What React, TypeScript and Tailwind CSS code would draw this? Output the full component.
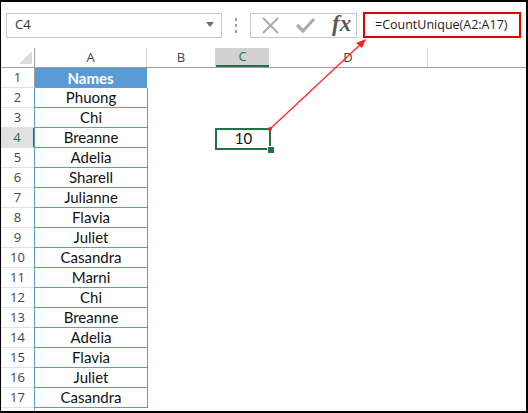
import React from "react";

const names = [
  "Phuong","Chi","Breanne","Adelia","Sharell","Julianne","Flavia","Juliet",
  "Casandra","Marni","Chi","Breanne","Adelia","Flavia","Juliet","Casandra",
];

const cellFont = { fontFamily: "Lato, 'Open Sans', sans-serif" };

export default function App() {
  return (
    <div className="relative w-[528px] h-[413px] overflow-hidden bg-white border-t-2 border-r-2 border-b-2 border-l border-black box-border">
      {/* Formula bar */}
      <div className="flex items-center h-[46px] pl-[5px]" style={{ fontFamily: "'Open Sans', 'Noto Sans', sans-serif" }}>
        <div className="flex items-center justify-between w-[216px] h-[25px] border border-[#c6c6c6] pl-[8px] pr-[6px] text-[13px] text-[#333]">
          <span>C4</span>
          <svg width="10" height="6" viewBox="0 0 10 6"><path d="M1 0 L9 0 L5 5 Z" fill="#6d6d6d" /></svg>
        </div>
        <div className="flex flex-col gap-[3px] ml-[13px] mr-[13px]">
          <div className="w-[2px] h-[3px] bg-[#a0a0a0]" />
          <div className="w-[2px] h-[3px] bg-[#a0a0a0]" />
          <div className="w-[2px] h-[3px] bg-[#a0a0a0]" />
        </div>
        <div className="flex items-center w-[107px] h-[25px] border border-[#c6c6c6]">
          <svg className="ml-[10px]" width="19" height="19" viewBox="0 0 19 19">
            <path d="M2 2 L17 17 M17 2 L2 17" stroke="#ababab" strokeWidth="2" />
          </svg>
          <svg className="ml-[15px]" width="21" height="18" viewBox="0 0 21 18">
            <path d="M2 9 L8 15 L19 3" stroke="#ababab" strokeWidth="3.2" fill="none" />
          </svg>
          <span className="ml-[16px] text-[23px] italic font-bold text-[#5a5a5a] leading-none -mt-[3px]" style={{ fontFamily: "'Liberation Serif', serif" }}>
            fx
          </span>
        </div>
        <div className="flex items-center w-[158px] h-[26px] ml-[6px] border-2 border-[#e00000] pl-[10px] text-[12.5px] text-[#222] whitespace-nowrap">
          =CountUnique(A2:A17)
        </div>
      </div>

      {/* Column headers */}
      <div className="flex h-[20px] border-b border-[#9e9e9e] text-[13px] text-[#444]" style={{ fontFamily: "'Open Sans', 'Noto Sans', sans-serif" }}>
        <div className="relative w-[34px] border-r border-[#9e9e9e]">
          <svg className="absolute right-[2px] bottom-[3px]" width="13" height="13" viewBox="0 0 13 13">
            <path d="M13 0 L13 13 L0 13 Z" fill="#dcdcdc" />
          </svg>
        </div>
        <div className="w-[112px] flex items-center justify-center border-r border-[#d4d4d4]">A</div>
        <div className="w-[69px] flex items-center justify-center border-r border-[#d4d4d4]">B</div>
        <div className="w-[53px] flex items-center justify-center bg-[#d2d2d2] border-b-2 border-[#217346] text-[#217346]">C</div>
        <div className="w-[159px] flex items-center justify-center border-r border-[#d4d4d4]">D</div>
        <div className="flex-1" />
      </div>

      {/* Rows */}
      {Array.from({ length: 18 }).map((_, i) => {
        const r = i + 1;
        const isSel = r === 4;
        return (
          <div key={r} className="flex h-[20px]">
            <div
              className={`w-[34px] flex items-center justify-center text-[13px] border-b border-[#e1e1e1] ${
                isSel ? "bg-[#e1e1e1] text-[#217346] border-r-2 border-r-[#217346]" : "text-[#444] border-r border-r-[#9e9e9e]"
              }`}
              style={{ fontFamily: "'Open Sans', 'Noto Sans', sans-serif" }}
            >
              {r <= 17 ? r : ""}
            </div>
            {r === 1 ? (
              <div className="w-[112px] flex items-center justify-center bg-[#5b9bd5] text-white font-bold text-[15px] border-r border-[#5b9bd5]" style={cellFont}>
                Names
              </div>
            ) : r <= 17 ? (
              <div className="w-[112px] flex items-center justify-center text-[15px] text-[#111] border-r border-b border-l border-[#5b9bd5] -ml-px box-content" style={cellFont}>
                {names[r - 2]}
              </div>
            ) : (
              <div className="w-[112px]" />
            )}
            <div className="w-[69px]" />
            <div className="w-[53px] flex items-center justify-center text-[15px] text-[#111]" style={cellFont}>
              {isSel ? "10" : ""}
            </div>
            <div className="flex-1" />
          </div>
        );
      })}

      {/* Selection overlay */}
      <div className="absolute left-[214px] top-[126px] w-[56px] h-[22px] border-2 border-[#217346] pointer-events-none" />
      <div className="absolute left-[266px] top-[144px] w-[6px] h-[6px] bg-[#217346] border border-white box-content" />

      {/* Arrow */}
      <svg className="absolute left-0 top-0 pointer-events-none" width="528" height="413">
        <line x1="269" y1="127" x2="361" y2="41" stroke="#ff2020" strokeWidth="1.2" />
        <path d="M365 37 L355 41 L361 46 Z" fill="#ff2020" />
        <circle cx="269" cy="127" r="2" fill="#ff2020" />
      </svg>
    </div>
  );
}
